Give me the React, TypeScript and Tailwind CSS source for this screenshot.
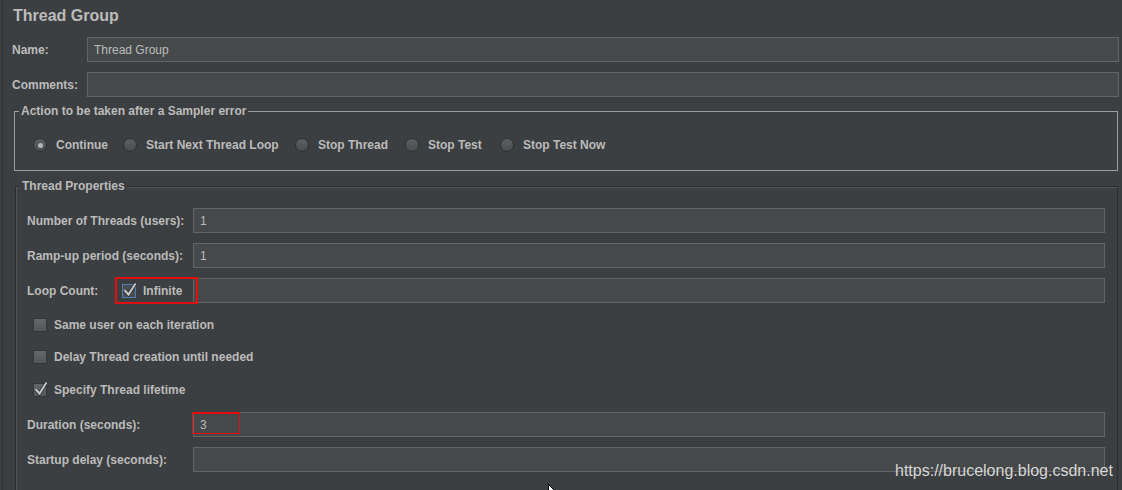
import React from "react";

const labelCls = "text-[12px] font-bold text-[#bbbbbb] leading-[14px] whitespace-nowrap";

function TextField({ value = "", width }: { value?: string; width: string }) {
  return (
    <div
      className={`${width} h-[25px] shrink-0 flex items-center bg-[#45494a] border border-[#646464] pl-[6px] text-[12px] text-[#bbbbbb]`}
    >
      {value}
    </div>
  );
}

function Radio({ checked = false }: { checked?: boolean }) {
  return (
    <span className="w-[14px] h-[14px] rounded-full border border-[#2e3032] bg-gradient-to-b from-[#5d6063] to-[#4a4d50] flex items-center justify-center shrink-0">
      {checked && <span className="w-[5px] h-[5px] rounded-full bg-[#b4b4b4]" />}
    </span>
  );
}

function Check({ checked = false, focused = false }: { checked?: boolean; focused?: boolean }) {
  return (
    <span
      className={`relative w-[14px] h-[14px] shrink-0 border ${
        focused ? "border-[#4d7fb8] bg-[#4a4e51]" : "border-[#333537] bg-gradient-to-b from-[#636669] to-[#55585b]"
      }`}
    >
      {checked && (
        <svg className="absolute -left-[1px] -top-[3px]" width="16" height="16" viewBox="0 0 16 16">
          <polyline points="2.5,8 6.5,12.5 13.5,1.5" fill="none" stroke="#2a2c2e" strokeWidth="3.4" />
          <polyline points="2.5,8 6.5,12.5 13.5,1.5" fill="none" stroke="#c8c8c8" strokeWidth="2" />
        </svg>
      )}
    </span>
  );
}

function FieldRow({ label, value, className = "" }: { label: string; value?: string; className?: string }) {
  return (
    <div className={`flex items-center h-[25px] ${className}`}>
      <div className={`${labelCls} w-[166px]`}>{label}</div>
      <TextField value={value} width="w-[912px]" />
    </div>
  );
}

function CheckRow({ label, checked = false, className = "" }: { label: string; checked?: boolean; className?: string }) {
  return (
    <div className={`flex items-center h-[25px] pl-[6px] gap-[7px] ${className}`}>
      <Check checked={checked} />
      <span className={labelCls}>{label}</span>
    </div>
  );
}

const radios = [
  { label: "Continue", w: "w-[90px]", checked: true },
  { label: "Start Next Thread Loop", w: "w-[172px]" },
  { label: "Stop Thread", w: "w-[110px]" },
  { label: "Stop Test", w: "w-[95px]" },
  { label: "Stop Test Now", w: "w-[120px]" },
];

export default function App() {
  return (
    <div className="relative flex w-[1122px] h-[490px] overflow-hidden bg-[#3c3f41] font-['Liberation_Sans',Arial,sans-serif]">
      <div className="w-[2px] shrink-0" />
      <div className="w-px shrink-0 bg-[#2f3133]" />
      <main className="flex-1 pt-[6px]">
        <h1 className="pl-[10px] h-[20px] leading-[20px] text-[16px] font-bold text-[#bbbbbb]">Thread Group</h1>

        <div className="flex items-center h-[25px] mt-[11px] pl-[9px]">
          <div className={`${labelCls} w-[75px]`}>Name:</div>
          <TextField value="Thread Group" width="w-[1032px]" />
        </div>
        <div className="flex items-center h-[25px] mt-[10px] pl-[9px]">
          <div className={`${labelCls} w-[75px]`}>Comments:</div>
          <TextField width="w-[1032px]" />
        </div>

        {/* Sampler error */}
        <div className="relative ml-[11px] mt-[14px] w-[1104px] h-[60px] border border-[#9d9d9d]">
          <span className={`absolute left-[4px] -top-[8px] px-[2px] bg-[#3c3f41] ${labelCls}`}>
            Action to be taken after a Sampler error
          </span>
          <div className="flex items-center h-[14px] mt-[26px] pl-[18px]">
            {radios.map((r) => (
              <div key={r.label} className={`flex items-center gap-[9px] ${r.w}`}>
                <Radio checked={r.checked} />
                <span className={labelCls}>{r.label}</span>
              </div>
            ))}
          </div>
        </div>

        {/* Thread properties */}
        <div className="relative ml-[12px] mt-[15px] w-[1103px] h-[340px] border border-[#2b2d2f] shadow-[inset_1px_1px_0_#4f5356]">
          <span className={`absolute left-[4px] -top-[8px] px-[2px] bg-[#3c3f41] ${labelCls}`}>Thread Properties</span>
          <div className="flex flex-col pl-[11px] pt-[21px]">
            <FieldRow label="Number of Threads (users):" value="1" />
            <FieldRow label="Ramp-up period (seconds):" value="1" className="mt-[10px]" />
            <div className="relative flex items-center h-[25px] mt-[10px]">
              <div className={`${labelCls} w-[95px]`}>Loop Count:</div>
              <div className="flex items-center gap-[7px] w-[71px]">
                <Check checked focused />
                <span className={labelCls}>Infinite</span>
              </div>
              <TextField width="w-[912px]" />
              <div className="absolute left-[88px] -top-[1px] w-[83px] h-[27px] border-2 border-[#e01010]" />
            </div>
            <CheckRow label="Same user on each iteration" className="mt-[9px]" />
            <CheckRow label="Delay Thread creation until needed" className="mt-[7px]" />
            <CheckRow label="Specify Thread lifetime" checked className="mt-[8px]" />
            <div className="relative mt-[10px]">
              <FieldRow label="Duration (seconds):" value="3" />
              <div className="absolute left-[165px] top-0 w-[48px] h-[22px] border border-t-2 border-[#e01010]" />
            </div>
            <FieldRow label="Startup delay (seconds):" className="mt-[10px]" />
          </div>
        </div>
      </main>

      <span className="absolute left-[895px] top-[463px] text-[16px] leading-[16px] text-[#d6d6d6] whitespace-nowrap">
        https://brucelong.blog.csdn.net
      </span>
      <svg className="absolute left-[548px] top-[484px]" width="10" height="14" viewBox="0 0 10 14">
        <path d="M0.5 0.5 L0.5 11 L3 8.5 L5 13 L6.5 12.3 L4.6 8 L8 8 Z" fill="#ffffff" stroke="#000000" strokeWidth="1" />
      </svg>
    </div>
  );
}
